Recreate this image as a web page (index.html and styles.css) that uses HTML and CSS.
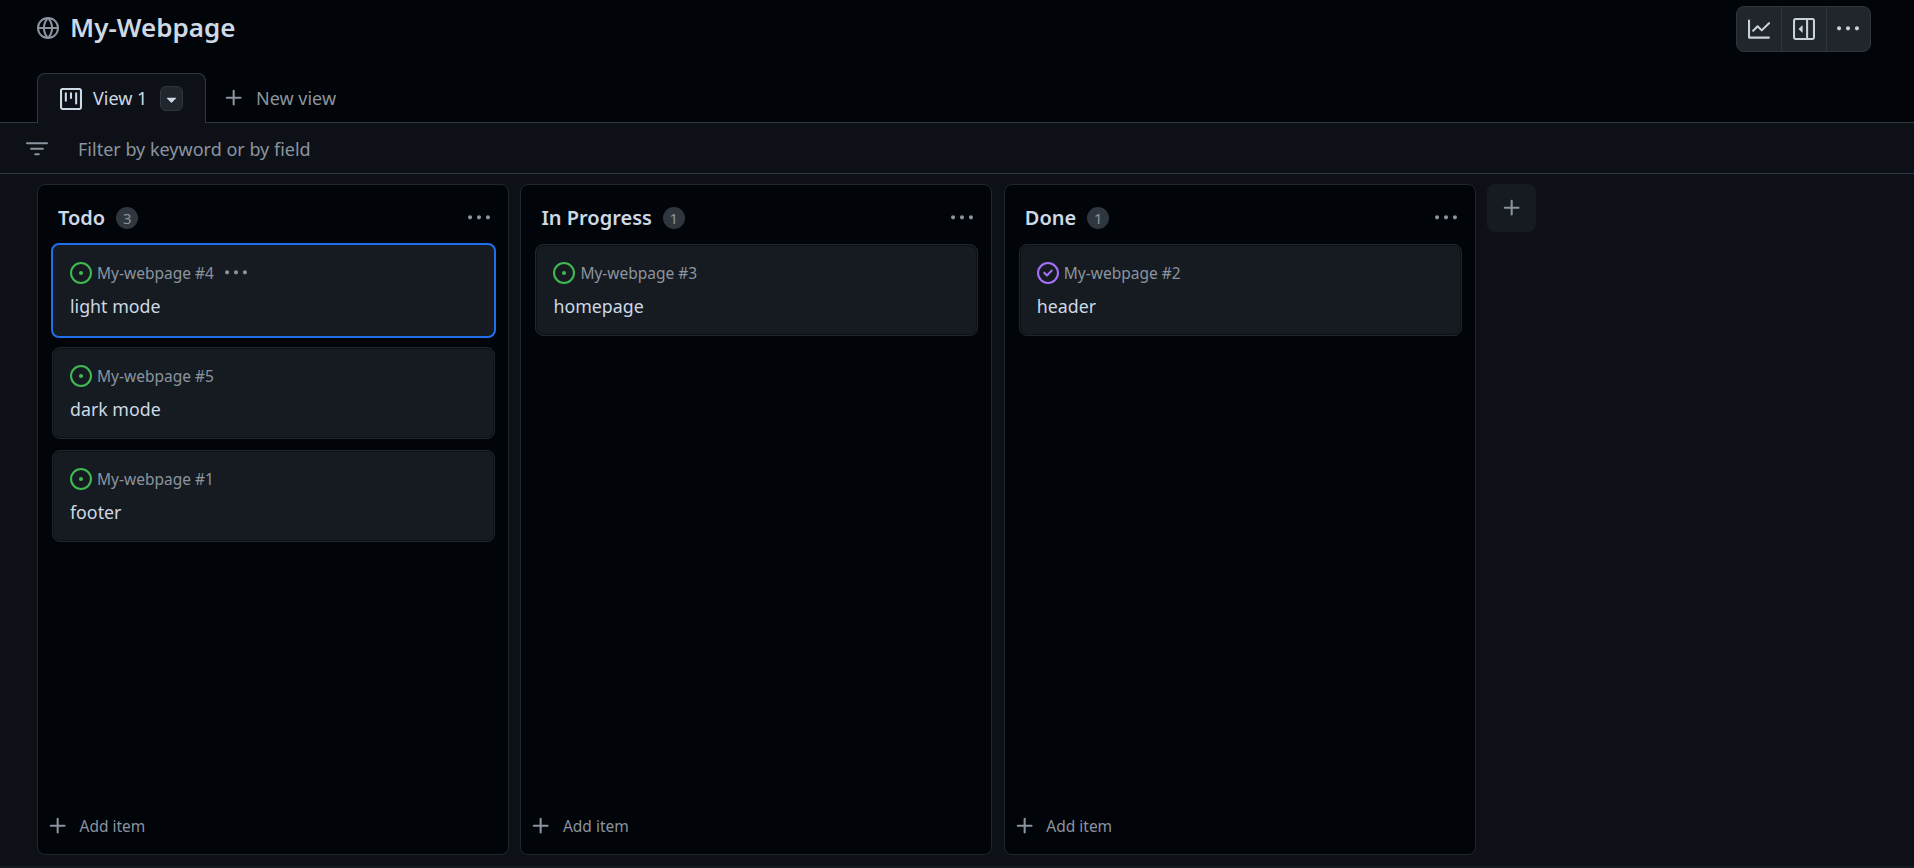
FILE: index.html
```html
<!DOCTYPE html>
<html lang="en">
<head>
  <meta charset="UTF-8">
  <title>My-Webpage</title>
  <link rel="stylesheet" href="styles.css">
</head>
<body>

  <svg class="sprite" aria-hidden="true">
    <symbol id="i-globe" viewBox="0 0 16 16"><path d="M8 0a8 8 0 1 1 0 16A8 8 0 0 1 8 0ZM5.78 8.75a9.64 9.64 0 0 0 1.363 4.177c.255.426.542.832.857 1.215.245-.296.551-.705.857-1.215A9.64 9.64 0 0 0 10.22 8.75Zm4.44-1.5a9.64 9.64 0 0 0-1.363-4.177c-.307-.51-.612-.919-.857-1.215a9.927 9.927 0 0 0-.857 1.215A9.64 9.64 0 0 0 5.78 7.25Zm-5.944 1.5H1.543a6.507 6.507 0 0 0 4.666 5.5c-.123-.181-.24-.365-.352-.552-.715-1.192-1.437-2.874-1.581-4.948Zm-2.733-1.5h2.733c.144-2.074.866-3.756 1.58-4.948.12-.197.237-.381.353-.552a6.507 6.507 0 0 0-4.666 5.5Zm10.181 1.5c-.144 2.074-.866 3.756-1.58 4.948-.12.197-.237.381-.353.552a6.507 6.507 0 0 0 4.666-5.5Zm2.733-1.5a6.507 6.507 0 0 0-4.666-5.5c.123.181.24.365.353.552.714 1.192 1.436 2.874 1.58 4.948Z"/></symbol>
    <symbol id="i-project" viewBox="0 0 16 16"><path d="M1.75 0h12.5C15.216 0 16 .784 16 1.75v12.5A1.75 1.75 0 0 1 14.25 16H1.75A1.75 1.75 0 0 1 0 14.25V1.75C0 .784.784 0 1.75 0ZM1.5 1.75v12.5c0 .138.112.25.25.25h12.5a.25.25 0 0 0 .25-.25V1.75a.25.25 0 0 0-.25-.25H1.75a.25.25 0 0 0-.25.25ZM11.75 3a.75.75 0 0 1 .75.75v7.5a.75.75 0 0 1-1.5 0v-7.5a.75.75 0 0 1 .75-.75Zm-8.25.75a.75.75 0 0 1 1.5 0v5.5a.75.75 0 0 1-1.5 0ZM8 3a.75.75 0 0 1 .75.75v3.5a.75.75 0 0 1-1.5 0v-3.5A.75.75 0 0 1 8 3Z"/></symbol>
    <symbol id="i-caret" viewBox="0 0 16 16"><path d="m4.427 7.427 3.396 3.396a.25.25 0 0 0 .354 0l3.396-3.396A.25.25 0 0 0 11.396 7H4.604a.25.25 0 0 0-.177.427Z"/></symbol>
    <symbol id="i-plus" viewBox="0 0 16 16"><path d="M7.75 2a.75.75 0 0 1 .75.75V7h4.25a.75.75 0 0 1 0 1.5H8.5v4.25a.75.75 0 0 1-1.5 0V8.5H2.75a.75.75 0 0 1 0-1.5H7V2.75A.75.75 0 0 1 7.75 2Z"/></symbol>
    <symbol id="i-filter" viewBox="0 0 16 16"><path d="M.75 3h14.5a.75.75 0 0 1 0 1.5H.75a.75.75 0 0 1 0-1.5ZM3 7.75A.75.75 0 0 1 3.75 7h8.5a.75.75 0 0 1 0 1.5h-8.5A.75.75 0 0 1 3 7.75Zm3 4a.75.75 0 0 1 .75-.75h2.5a.75.75 0 0 1 0 1.5h-2.5a.75.75 0 0 1-.75-.75Z"/></symbol>
    <symbol id="i-kebab" viewBox="0 0 16 16"><path d="M8 9a1.5 1.5 0 1 0 0-3 1.5 1.5 0 0 0 0 3ZM1.5 9a1.5 1.5 0 1 0 0-3 1.5 1.5 0 0 0 0 3Zm13 0a1.5 1.5 0 1 0 0-3 1.5 1.5 0 0 0 0 3Z"/></symbol>
    <symbol id="i-graph" viewBox="0 0 16 16"><path d="M1.5 1.75V13.5h13.75a.75.75 0 0 1 0 1.5H.75a.75.75 0 0 1-.75-.75V1.75a.75.75 0 0 1 1.5 0Zm14.28 2.53-5.25 5.25a.75.75 0 0 1-1.06 0L7 7.06 4.28 9.78a.751.751 0 0 1-1.042-.018.751.751 0 0 1-.018-1.042l3.25-3.25a.75.75 0 0 1 1.06 0L10 7.94l4.72-4.72a.751.751 0 0 1 1.042.018.751.751 0 0 1 .018 1.042Z"/></symbol>
    <symbol id="i-sidebar" viewBox="0 0 16 16"><path d="m4.177 7.823 2.396-2.396A.25.25 0 0 1 7 5.604v4.792a.25.25 0 0 1-.427.177L4.177 8.177a.25.25 0 0 1 0-.354Z"/><path d="M0 1.75C0 .784.784 0 1.75 0h12.5C15.216 0 16 .784 16 1.75v12.5A1.75 1.75 0 0 1 14.25 16H1.75A1.75 1.75 0 0 1 0 14.25Zm1.75-.25a.25.25 0 0 0-.25.25v12.5c0 .138.112.25.25.25H9.5v-13Zm12.5 13a.25.25 0 0 0 .25-.25V1.75a.25.25 0 0 0-.25-.25H11v13Z"/></symbol>
    <symbol id="i-open" viewBox="0 0 16 16"><path d="M8 9.5a1.5 1.5 0 1 0 0-3 1.5 1.5 0 0 0 0 3Z"/><path d="M8 0a8 8 0 1 1 0 16A8 8 0 0 1 8 0ZM1.5 8a6.5 6.5 0 1 0 13 0 6.5 6.5 0 0 0-13 0Z"/></symbol>
    <symbol id="i-closed" viewBox="0 0 16 16"><path d="M11.28 6.78a.75.75 0 0 0-1.06-1.06L7.25 8.69 5.78 7.22a.75.75 0 0 0-1.06 1.06l2 2a.75.75 0 0 0 1.06 0l3.5-3.5Z"/><path d="M16 8A8 8 0 1 1 0 8a8 8 0 0 1 16 0Zm-1.5 0a6.5 6.5 0 1 0-13 0 6.5 6.5 0 0 0 13 0Z"/></symbol>
  </svg>

  <header class="top">
    <div class="title">
      <svg class="icon muted"><use href="#i-globe"/></svg>
      <h1>My-Webpage</h1>
    </div>
    <div class="actions">
      <button class="action"><svg class="icon"><use href="#i-graph"/></svg></button>
      <button class="action"><svg class="icon"><use href="#i-sidebar"/></svg></button>
      <button class="action"><svg class="icon"><use href="#i-kebab"/></svg></button>
    </div>
  </header>

  <nav class="tabs">
    <div class="tab">
      <svg class="icon"><use href="#i-project"/></svg>
      <span class="tab-label">View 1</span>
      <span class="tab-caret"><svg class="icon-sm"><use href="#i-caret"/></svg></span>
    </div>
    <div class="new-view">
      <svg class="icon muted"><use href="#i-plus"/></svg>
      <span>New view</span>
    </div>
  </nav>

  <div class="filter">
    <svg class="icon muted"><use href="#i-filter"/></svg>
    <span>Filter by keyword or by field</span>
  </div>

  <main class="board">
    <section class="column">
      <div class="column-head">
        <h2>Todo</h2>
        <span class="count">3</span>
        <svg class="icon muted column-menu"><use href="#i-kebab"/></svg>
      </div>
      <div class="cards">
        <article class="card focused">
          <div class="card-meta">
            <svg class="icon open"><use href="#i-open"/></svg>
            <span>My-webpage #4</span>
            <svg class="icon muted card-menu"><use href="#i-kebab"/></svg>
          </div>
          <div class="card-title">light mode</div>
        </article>
        <article class="card">
          <div class="card-meta">
            <svg class="icon open"><use href="#i-open"/></svg>
            <span>My-webpage #5</span>
          </div>
          <div class="card-title">dark mode</div>
        </article>
        <article class="card">
          <div class="card-meta">
            <svg class="icon open"><use href="#i-open"/></svg>
            <span>My-webpage #1</span>
          </div>
          <div class="card-title">footer</div>
        </article>
      </div>
      <div class="add-item">
        <svg class="icon muted"><use href="#i-plus"/></svg>
        <span>Add item</span>
      </div>
    </section>

    <section class="column">
      <div class="column-head">
        <h2>In Progress</h2>
        <span class="count">1</span>
        <svg class="icon muted column-menu"><use href="#i-kebab"/></svg>
      </div>
      <div class="cards">
        <article class="card">
          <div class="card-meta">
            <svg class="icon open"><use href="#i-open"/></svg>
            <span>My-webpage #3</span>
          </div>
          <div class="card-title">homepage</div>
        </article>
      </div>
      <div class="add-item">
        <svg class="icon muted"><use href="#i-plus"/></svg>
        <span>Add item</span>
      </div>
    </section>

    <section class="column">
      <div class="column-head">
        <h2>Done</h2>
        <span class="count">1</span>
        <svg class="icon muted column-menu"><use href="#i-kebab"/></svg>
      </div>
      <div class="cards">
        <article class="card">
          <div class="card-meta">
            <svg class="icon closed"><use href="#i-closed"/></svg>
            <span>My-webpage #2</span>
          </div>
          <div class="card-title">header</div>
        </article>
      </div>
      <div class="add-item">
        <svg class="icon muted"><use href="#i-plus"/></svg>
        <span>Add item</span>
      </div>
    </section>

    <button class="add-column"><svg class="icon muted"><use href="#i-plus"/></svg></button>
  </main>

</body>
</html>
```

FILE: styles.css
```css
* {
  box-sizing: border-box;
}

html, body {
  height: 100%;
}

body {
  margin: 0;
  display: flex;
  flex-direction: column;
  font-family: "Noto Sans", "Open Sans", sans-serif;
  background: #010409;
  color: #c9d1d9;
  overflow: hidden;
}

.sprite {
  display: none;
}

.icon {
  width: 22px;
  height: 22px;
  fill: currentColor;
  flex: none;
}

.icon-sm {
  width: 22px;
  height: 22px;
  fill: currentColor;
}

.muted {
  color: #8b949e;
}

/* top */
.top {
  height: 73px;
  padding: 6px 43px 0 37px;
  display: flex;
  justify-content: space-between;
  align-items: flex-start;
}

.title {
  display: flex;
  align-items: center;
  gap: 11px;
  height: 44px;
}

h1 {
  margin: 0 0 2px;
  font-size: 26px;
  font-weight: 600;
  color: #cdd9e5;
}

.actions {
  display: flex;
  height: 46px;
  background: #21262d;
  border: 1px solid #30363d;
  border-radius: 8px;
}

.action {
  width: 44.3px;
  padding: 0;
  background: none;
  border: none;
  border-left: 1px solid #30363d;
  color: #c9d1d9;
  display: flex;
  align-items: center;
  justify-content: center;
}

.action:first-child {
  border-left: none;
}

/* tabs */
.tabs {
  height: 50px;
  padding-left: 37px;
  display: flex;
  border-bottom: 1px solid #30363d;
}

.tab {
  width: 169px;
  height: 50px;
  padding: 0 22px;
  display: flex;
  align-items: center;
  gap: 11px;
  font-size: 18px;
  white-space: nowrap;
  color: #cdd9e5;
  background: #0d1117;
  border: 1px solid #30363d;
  border-bottom: none;
  border-radius: 8px 8px 0 0;
}

.tab-label {
  margin-bottom: 2px;
}

.tab-caret {
  width: 23px;
  height: 25px;
  margin-left: auto;
  display: flex;
  align-items: center;
  justify-content: center;
  background: #21262d;
  border: 1px solid #30363d;
  border-radius: 6px;
}

.new-view {
  padding-left: 17px;
  display: flex;
  align-items: center;
  gap: 11px;
  font-size: 18px;
  color: #8b949e;
}

/* filter */
.filter {
  height: 51px;
  padding: 1px 0 0 26px;
  display: flex;
  align-items: center;
  gap: 30px;
  font-size: 18px;
  color: #8b949e;
  background: #0d1117;
  border-bottom: 1px solid #30363d;
}

/* board */
.board {
  flex: 1;
  min-height: 0;
  padding: 10px 0 11px 37px;
  display: flex;
  align-items: stretch;
  gap: 11.4px;
  background: #0d1117;
  border-bottom: 2px solid #161b22;
}

.column {
  width: 472px;
  display: flex;
  flex-direction: column;
  background: #010409;
  border: 1px solid #21262d;
  border-radius: 8px;
}

.column-head {
  height: 59px;
  padding: 6px 18px 0 20px;
  display: flex;
  align-items: center;
  gap: 11px;
}

h2 {
  margin: 0;
  font-size: 20px;
  font-weight: 600;
  color: #cdd9e5;
}

.count {
  width: 22px;
  height: 22px;
  display: flex;
  align-items: center;
  justify-content: center;
  font-size: 15px;
  color: #8b949e;
  background: #30363d;
  border-radius: 50%;
}

.column-menu {
  margin-left: auto;
}

.cards {
  flex: 1;
  padding: 0 13px 0 14px;
  display: flex;
  flex-direction: column;
  gap: 11px;
}

.card {
  height: 92px;
  padding: 17px 17px 0;
  background: #161b22;
  border: 1px solid #21262d;
  box-shadow: inset 0 0 0 1px #0d1117;
  border-radius: 8px;
}

.card.focused {
  height: 95px;
  margin: -1px -1px -2px;
  border: 2px solid #1f6feb;
  box-shadow: none;
}

.card-meta {
  height: 22px;
  display: flex;
  align-items: center;
  gap: 5px;
  font-size: 15.5px;
  color: #8b949e;
}

.card-menu {
  margin-left: 6px;
}

.open {
  color: #3fb950;
}

.closed {
  color: #a371f7;
}

.card-title {
  margin-top: 9px;
  font-size: 17.8px;
  line-height: 26px;
  color: #cdd9e5;
}

.add-item {
  height: 58px;
  padding: 2px 0 0 9px;
  display: flex;
  align-items: center;
  gap: 10.5px;
  font-size: 15.5px;
  color: #8b949e;
}

.add-column {
  width: 49px;
  height: 48px;
  padding: 0;
  display: flex;
  align-items: center;
  justify-content: center;
  background: #161b22;
  border: none;
  border-radius: 8px;
}
```
